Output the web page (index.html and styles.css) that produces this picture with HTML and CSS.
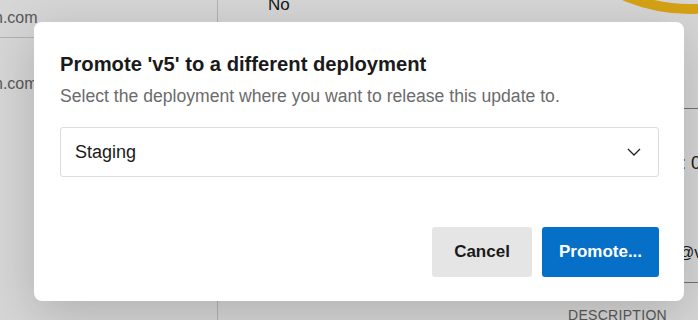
FILE: index.html
```html
<!DOCTYPE html>
<html>
<head>
<meta charset="utf-8">
<link rel="stylesheet" href="styles.css">
</head>
<body>
<div class="page">
  <div class="col-left">
    <div class="row row-1"><span class="email">n.com</span></div>
    <div class="row row-2"><span class="email">n.com</span></div>
  </div>
  <div class="col-mid">
    <div class="cell-no">No</div>
    <div class="desc-label">DESCRIPTION</div>
  </div>
  <div class="col-right">
    <div class="ring"></div>
    <div class="side-line side-line-1"></div>
    <div class="side-val">: 0</div>
    <div class="side-val side-email">@v</div>
    <div class="side-line side-line-2"></div>
  </div>
</div>
<div class="overlay">
  <div class="dialog">
    <h2 class="dialog-title">Promote 'v5' to a different deployment</h2>
    <p class="dialog-sub">Select the deployment where you want to release this update to.</p>
    <div class="select">
      <span class="select-value">Staging</span>
      <svg class="chevron" width="14" height="8" viewBox="0 0 14 8"><path d="M1 1 L7 7 L13 1" fill="none" stroke="#222" stroke-width="1.3"/></svg>
    </div>
    <div class="actions">
      <button class="btn btn-cancel">Cancel</button>
      <button class="btn btn-primary">Promote...</button>
    </div>
  </div>
</div>
</body>
</html>
```
FILE: styles.css
```css
html, body {
  margin: 0;
  padding: 0;
  width: 698px;
  height: 320px;
  overflow: hidden;
  font-family: "Liberation Sans", Arial, sans-serif;
}
.page {
  display: grid;
  grid-template-columns: 218px 466px 14px;
  height: 320px;
  background: #fff;
  overflow: hidden;
}
.col-left {
  border-right: 1px solid #d4d4d4;
}
.row {
  box-sizing: border-box;
}
.row-1 { height: 38px; padding-top: 8px; border-bottom: 1px solid #d4d4d4; }
.row-2 { height: 80px; padding-top: 36px; }
.email {
  display: block;
  margin-left: -6px;
  font-size: 16px;
  color: #6b6b6b;
  line-height: 20px;
}
.col-mid {
  display: flex;
  flex-direction: column;
  justify-content: space-between;
}
.cell-no {
  margin-top: -5px;
  padding-left: 50px;
  font-size: 17px;
  line-height: 20px;
  color: #1a1a1a;
}
.desc-label {
  padding-left: 350px;
  font-size: 14px;
  line-height: 16px;
  margin-bottom: -3px;
  color: #6b6b6b;
  letter-spacing: 0.3px;
}
.col-right {
  position: relative;
  display: flex;
  flex-direction: column;
}
.ring {
  position: absolute;
  left: -166px;
  top: -330px;
  width: 324px;
  height: 324px;
  border: 10px solid #ffc21a;
  border-radius: 50%;
}
.side-line {
  border-top: 1px solid #8a8a8a;
  margin-left: -2px;
}
.side-line-1 { margin-top: 108px; }
.side-line-2 { margin-top: 18px; }
.side-val {
  font-size: 18px;
  line-height: 22px;
  color: #1a1a1a;
  margin-left: -3px;
  white-space: nowrap;
  margin-top: 43px;
}
.side-email {
  font-size: 16px;
  margin-top: 68px;
  margin-left: -6px;
}
.overlay {
  position: absolute;
  inset: 0;
  background: rgba(0, 0, 0, 0.16);
}
.dialog {
  position: absolute;
  left: 34px;
  top: 22px;
  width: 650px;
  height: 279px;
  box-sizing: border-box;
  padding: 29px 25px 24px 26px;
  background: #fff;
  border-radius: 8px;
  box-shadow: 0 12px 50px rgba(0, 0, 0, 0.18);
  display: flex;
  flex-direction: column;
}
.dialog-title {
  margin: 0;
  font-size: 20.2px;
  line-height: 26px;
  font-weight: bold;
  color: #1a1a1a;
}
.dialog-sub {
  margin: 8px 0 0;
  font-size: 17.6px;
  line-height: 22px;
  color: #6b6b6b;
}
.select {
  margin-top: 20px;
  height: 50px;
  box-sizing: border-box;
  border: 1px solid #dcdcdc;
  border-radius: 3px;
  display: flex;
  align-items: center;
  justify-content: space-between;
  padding: 0 17px 0 14px;
}
.select-value {
  font-size: 18px;
  color: #1a1a1a;
}
.chevron { display: block; }
.actions {
  margin-top: auto;
  display: flex;
  justify-content: flex-end;
  gap: 10px;
}
.btn {
  height: 50px;
  border: none;
  border-radius: 3px;
  font-family: inherit;
  font-size: 17px;
  font-weight: bold;
  padding: 0;
}
.btn-cancel {
  width: 100px;
  background: #e5e5e5;
  color: #1a1a1a;
}
.btn-primary {
  width: 117px;
  background: #0670c8;
  color: #fff;
}
```
